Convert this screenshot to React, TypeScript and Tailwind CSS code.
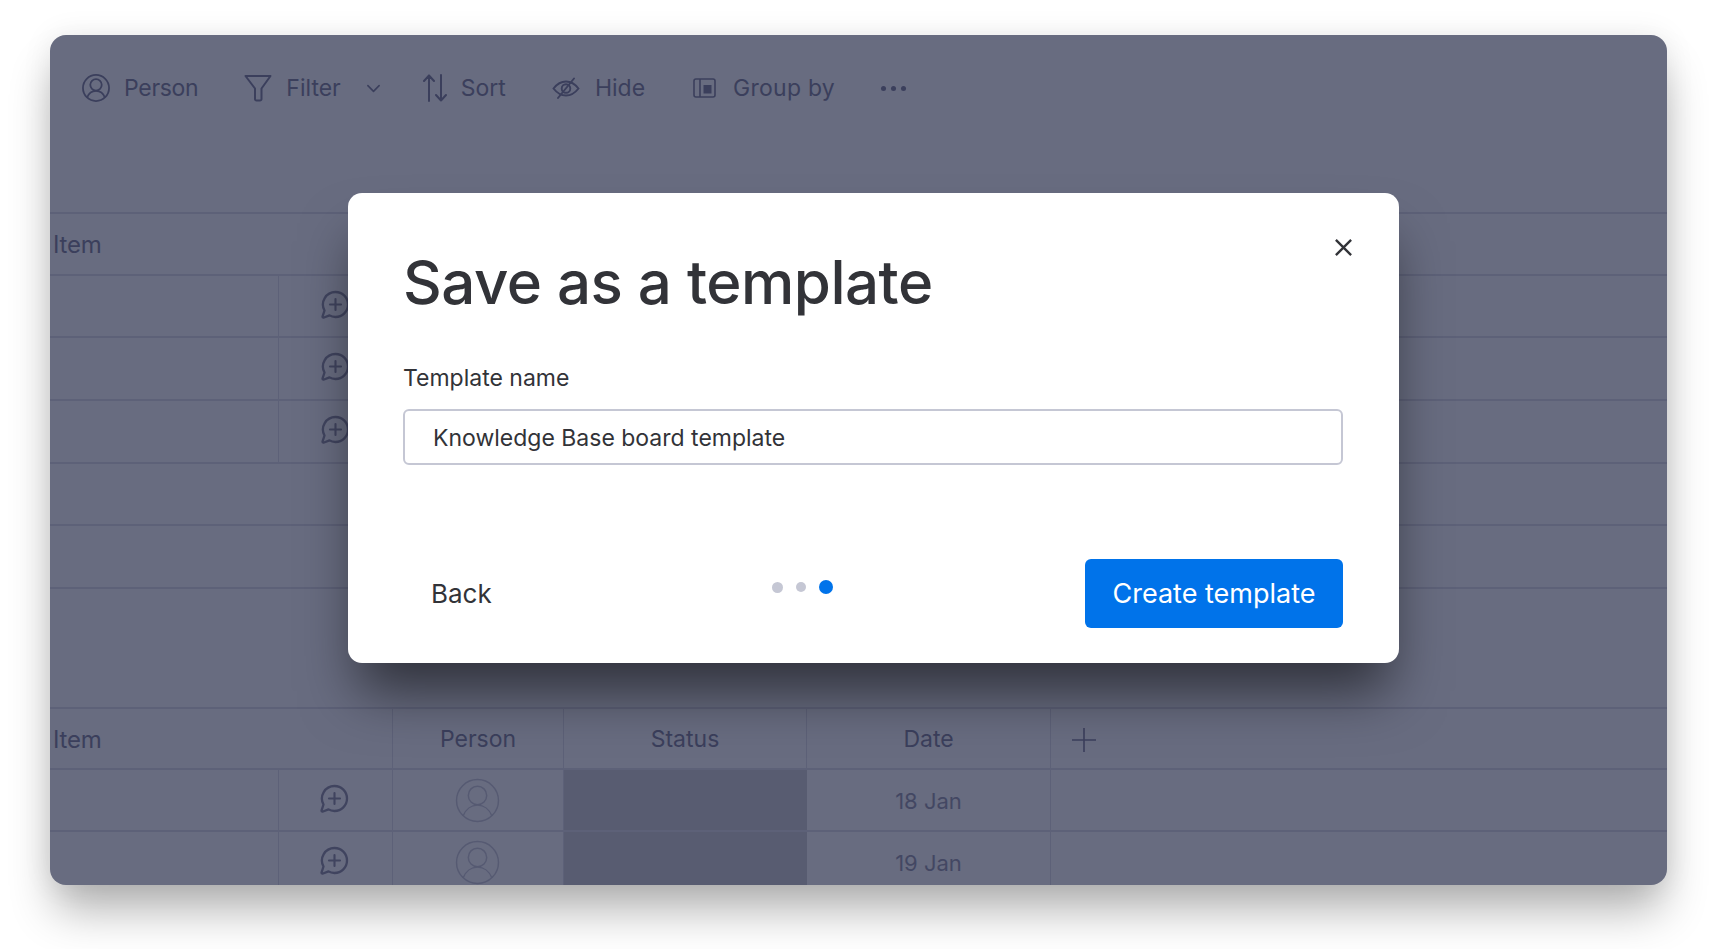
const rowLine = 'border-b-2 border-[#5d6178]';

const PersonIcon = ({ className, stroke }: { className: string; stroke: number }) => (
  <svg viewBox="0 0 44 44" fill="none" stroke="currentColor" strokeWidth={stroke} className={className}>
    <circle cx="22" cy="22" r="20.5" />
    <circle cx="22" cy="17" r="9" />
    <path d="M8 37c2.500-6.500 8-10.500 14-10.500S33.500 30.500 36 37" />
  </svg>
);

const CommentIcon = () => (
  <svg viewBox="0 0 30 30" fill="none" stroke="currentColor" strokeWidth="2.3" strokeLinecap="round" strokeLinejoin="round" className="w-[30px] h-[30px] mr-[3px] mb-[3px] text-[#40445f]">
    <path d="M15.500 2a12.500 12.500 0 1 1 0 25c-2.200 0-4.300-.5-6-1.600L4 27.500c-1 .4-1.700-.2-1.400-1.200l1.900-5.800A12.500 12.500 0 0 1 15.500 2Z" />
    <path d="M15.500 9v11M10 14.500h11" strokeWidth="2.100" />
  </svg>
);

const Toolbar = () => (
  <div className={`h-[179px] flex items-start pt-[39px] pl-[32px] text-[#3b3f5c] text-[23px] ${rowLine}`}>
    <div className="flex items-center h-[28px]">
      <PersonIcon className="w-[28px] h-[28px]" stroke={2.800} />
      <span className="ml-[14px] tracking-[-0.3px]">Person</span>
    </div>
    <div className="flex items-center h-[28px] ml-[46px]">
      <svg viewBox="0 0 28 28" fill="none" stroke="currentColor" strokeWidth="2" strokeLinejoin="round" className="w-[28px] h-[28px]">
        <path d="M1.500 2h25L17.500 14.500V25a1.500 1.500 0 0 1-1.500 1.500h-3.500A1.500 1.500 0 0 1 11 25V14.500Z" />
      </svg>
      <span className="ml-[14px]">Filter</span>
      <svg viewBox="0 0 16 16" fill="none" stroke="currentColor" strokeWidth="1.700" strokeLinecap="round" strokeLinejoin="round" className="w-[15px] h-[15px] ml-[25px]">
        <path d="M2 5l6 6 6-6" />
      </svg>
    </div>
    <div className="flex items-center h-[28px] ml-[42px]">
      <svg viewBox="0 0 24 28" fill="none" stroke="currentColor" strokeWidth="2" strokeLinecap="round" strokeLinejoin="round" className="w-[24px] h-[28px]">
        <path d="M6 27V1.500M1 7l5-5.500L11 7M18 1v25.500M13 21l5 5.500 5-5.500" />
      </svg>
      <span className="ml-[14px]">Sort</span>
    </div>
    <div className="flex items-center h-[28px] ml-[46px]">
      <svg viewBox="0 0 28 22" fill="none" stroke="currentColor" strokeWidth="1.900" strokeLinecap="round" className="w-[28px] h-[22px]">
        <path d="M1.500 11.500C5 7 9 4.500 14 4.500s9 2.500 12.500 7C23 16 19 18.500 14 18.500S5 16 1.500 11.500Z" />
        <circle cx="14" cy="11.500" r="4.300" />
        <path d="M6 21 22 1.500" />
      </svg>
      <span className="ml-[15px]">Hide</span>
    </div>
    <div className="flex items-center h-[28px] ml-[48px]">
      <svg viewBox="0 0 23 20" fill="none" stroke="currentColor" strokeWidth="1.600" className="w-[23px] h-[20px]">
        <rect x="1" y="1" width="21" height="18" rx="2" />
        <path d="M7 1v18" />
        <rect x="10.500" y="7" width="8" height="8.500" fill="currentColor" stroke="none" />
      </svg>
      <span className="ml-[17px] tracking-[0.25px]">Group by</span>
    </div>
    <div className="flex items-center h-[28px] ml-[46px] gap-[5px]">
      <span className="w-[5px] h-[5px] rounded-full bg-[#3b3f5c]" />
      <span className="w-[5px] h-[5px] rounded-full bg-[#3b3f5c]" />
      <span className="w-[5px] h-[5px] rounded-full bg-[#3b3f5c]" />
    </div>
  </div>
);

const TopTable = () => (
  <div>
    <div className={`h-[62px] flex items-center pl-[3px] pt-[2px] text-[24px] tracking-[-0.2px] text-[#3b3f5c] ${rowLine}`}>Item</div>
    {[62, 63, 63].map((h, i) => (
      <div key={i} className={`flex ${rowLine} ${h === 62 ? 'h-[62px]' : 'h-[63px]'}`}>
        <div className="w-[229px] border-r border-[#5d6178]" />
        <div className="w-[114px] flex items-center justify-center">
          <CommentIcon />
        </div>
      </div>
    ))}
    <div className={`h-[62px] ${rowLine}`} />
    <div className={`h-[63px] ${rowLine}`} />
  </div>
);

const BottomTable = () => (
  <div className="mt-[118px]">
    <div className={`h-[63px] flex text-[23px] text-[#3b3f5c] border-t-2 border-[#5d6178] ${rowLine}`}>
      <div className="w-[343px] flex items-center pl-[3px] pt-[2px] border-r border-[#5d6178] text-[24px] tracking-[-0.2px]">Item</div>
      <div className="w-[171px] flex items-center justify-center pt-[2px] border-r border-[#5d6178]">Person</div>
      <div className="w-[243px] flex items-center justify-center pt-[2px] border-r border-[#5d6178]">Status</div>
      <div className="w-[244px] flex items-center justify-center pt-[2px] border-r border-[#5d6178]">Date</div>
      <div className="flex items-center pl-[20px] pt-[2px]">
        <svg viewBox="0 0 26 26" stroke="currentColor" strokeWidth="1.600" className="w-[26px] h-[26px]">
          <path d="M13 1v24M1 13h24" />
        </svg>
      </div>
    </div>
    {['18 Jan', '19 Jan'].map((d, i) => (
      <div key={d} className={`flex text-[22px] text-[#3b3f5c] ${rowLine} ${i === 0 ? 'h-[62px]' : 'h-[63px]'}`}>
        <div className="w-[229px] border-r border-[#5d6178]" />
        <div className="w-[114px] flex items-center justify-center border-r border-[#5d6178]">
          <CommentIcon />
        </div>
        <div className="w-[171px] flex items-center justify-center pr-[2px] border-r border-[#5d6178]">
          <PersonIcon className="w-[45px] h-[45px] text-[#565a72]" stroke={1.400} />
        </div>
        <div className="w-[243px] bg-[#585c71]" />
        <div className="w-[244px] flex items-center justify-center pt-[2px] border-r border-[#5d6178]">
          <span className="opacity-80">{d}</span>
        </div>
      </div>
    ))}
  </div>
);

const Modal = () => (
  <div className="absolute left-[298px] top-[158px] w-[1051px] h-[470px] bg-white rounded-[14px] shadow-[0_38px_55px_-10px_rgba(0,0,0,0.55)] pl-[55px] pr-[56px] pt-[54px] text-[#323338]">
    <svg viewBox="0 0 20 20" fill="none" stroke="currentColor" strokeWidth="2.500" className="absolute right-[46px] top-[45px] w-[19px] h-[19px]">
      <path d="M2 2l16 16M18 2 2 18" />
    </svg>
    <h1 className="text-[60px] leading-[70px] font-medium tracking-[-0.5px]">Save as a template</h1>
    <div className="mt-[45px] text-[23px] leading-[32px]">Template name</div>
    <div className="mt-[15px] h-[56px] border-2 border-[#c5c7d4] rounded-[6px] flex items-center pl-[28px] pt-[2px] text-[23px]">
      Knowledge Base board template
    </div>
    <div className="mt-[94px] flex items-start">
      <span className="ml-[28px] mt-[19px] text-[26px] leading-[32px]">Back</span>
      <div className="ml-[280px] mt-[21px] flex items-center gap-[13px]">
        <span className="w-[11px] h-[11px] rounded-full bg-[#c5c7d4]" />
        <span className="w-[10px] h-[10px] rounded-full bg-[#c5c7d4]" />
        <span className="w-[14px] h-[14px] rounded-full bg-[#0073ea]" />
      </div>
      <div className="ml-auto w-[258px] h-[69px] pt-[2px] bg-[#0073ea] rounded-[6px] text-white text-[27px] flex items-center justify-center">
        Create template
      </div>
    </div>
  </div>
);

export default function App() {
  return (
    <div className="w-[1717px] h-[949px] bg-white pl-[50px] pt-[35px] overflow-hidden font-['Inter',sans-serif]">
      <div className="relative w-[1617px] h-[850px] bg-[#686c80] rounded-[16px] shadow-[0_30px_45px_-5px_rgba(0,0,0,0.3),0_0_30px_rgba(0,0,0,0.08)]">
        <div className="h-full overflow-hidden rounded-[16px]">
          <Toolbar />
          <TopTable />
          <BottomTable />
        </div>
        <Modal />
      </div>
    </div>
  );
}
